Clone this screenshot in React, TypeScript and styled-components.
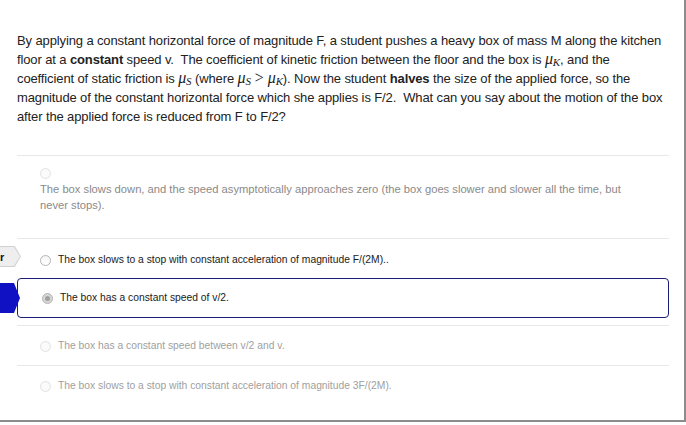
import styled, { createGlobalStyle } from 'styled-components';

const GlobalStyle = createGlobalStyle`
  html, body {
    margin: 0;
    padding: 0;
    background: #ffffff;
  }
  body {
    font-family: "Liberation Sans", Arial, sans-serif;
  }
`;

const Page = styled.div`
  position: relative;
  box-sizing: border-box;
  width: 686px;
  height: 422px;
  padding: 31px 17px 0 17px;
  border-right: 2px solid #8c8c8c;
  border-bottom: 2px solid #8c8c8c;
  background: #ffffff;
  overflow: hidden;
`;

const Question = styled.p`
  margin: 0;
  width: 660px;
  font-size: 13px;
  line-height: 19px;
  letter-spacing: -0.12px;
  color: #222222;

  b {
    font-weight: bold;
  }
`;

const Mu = styled.span`
  font-family: "Liberation Serif", "Times New Roman", serif;
  font-style: italic;
  font-size: 16px;
  line-height: 0;

  sub {
    font-size: 11px;
    vertical-align: -2px;
    line-height: 0;
  }
`;

const Gt = styled.span`
  font-family: "Liberation Serif", "Times New Roman", serif;
  font-size: 16px;
  line-height: 0;
  padding: 0 4px;
`;

const Options = styled.div`
  display: flex;
  flex-direction: column;
  width: 652px;
  margin-top: 29px;
`;

const Option = styled.div<{ $faded?: boolean }>`
  display: flex;
  align-items: center;
  gap: 7px;
  border-top: 1px solid #e8e8e8;
  padding: 12px 0 11px 23px;
  font-size: 10.3px;
  line-height: 16px;
  color: ${(p) => (p.$faded ? '#a0a0a0' : '#1a1a1a')};
`;

const SecondOption = styled(Option)`
  padding-top: 13px;
  padding-bottom: 10px;
`;

const FirstOption = styled.div`
  display: flex;
  flex-direction: column;
  align-items: flex-start;
  gap: 2px;
  border-top: 1px solid #e8e8e8;
  padding: 12px 0 25px 23px;
  font-size: 11.2px;
  line-height: 16px;
  color: #8a8a8a;

  span {
    max-width: 600px;
  }
`;

const SelectedOption = styled.div`
  display: flex;
  align-items: center;
  gap: 7px;
  box-sizing: border-box;
  height: 40px;
  margin-bottom: 7px;
  padding-left: 24px;
  border: 1.5px solid #1c1c7a;
  border-radius: 4px;
  font-size: 10.3px;
  line-height: 16px;
  color: #1a1a1a;
`;

const Radio = styled.span<{ $checked?: boolean; $faded?: boolean }>`
  position: relative;
  flex: none;
  box-sizing: border-box;
  width: 11px;
  height: 11px;
  border-radius: 50%;
  border: 1px solid ${(p) => (p.$faded ? '#e2e2e2' : '#b5b5b5')};
  background: ${(p) =>
    p.$checked ? '#d6d6d6' : p.$faded ? '#fbfbfb' : 'linear-gradient(#f4f4f4, #ffffff)'};

  &::after {
    content: '';
    display: ${(p) => (p.$checked ? 'block' : 'none')};
    position: absolute;
    left: 2px;
    top: 2px;
    width: 5px;
    height: 5px;
    border-radius: 50%;
    background: #a0a0a0;
  }
`;

const Tab = styled.div<{ $top: number; $height: number; $active?: boolean }>`
  position: absolute;
  left: 0;
  top: ${(p) => p.$top}px;
  width: 20px;
  height: ${(p) => p.$height}px;
  display: flex;
  align-items: center;
  background: ${(p) => (p.$active ? '#1111c4' : '#eeeeee')};
  clip-path: polygon(0 0, 70% 0, 100% 50%, 70% 100%, 0 100%);
  font-size: 11px;
  font-weight: bold;
  color: #111111;
  overflow: hidden;
`;

const TabEdge = styled.div`
  position: absolute;
  left: 0;
  top: 246px;
  width: 21px;
  height: 21px;
  background: #d0d0d0;
  clip-path: polygon(0 0, 70% 0, 100% 50%, 70% 100%, 0 100%);
`;

const App = () => {
  return (
    <>
      <GlobalStyle />
      <Page>
        <Question>
          By applying a constant horizontal force of magnitude F, a student pushes a heavy box of mass M along the kitchen
          <br />
          floor at a <b>constant</b> speed v.&nbsp; The coefficient of kinetic friction between the floor and the box is{' '}
          <Mu>
            μ<sub>K</sub>
          </Mu>
          , and the
          <br />
          coefficient of static friction is{' '}
          <Mu>
            μ<sub>S</sub>
          </Mu>{' '}
          (where{' '}
          <Mu>
            μ<sub>S</sub>
          </Mu>
          <Gt>&gt;</Gt>
          <Mu>
            μ<sub>K</sub>
          </Mu>
          ). Now the student <b>halves</b> the size of the applied force, so the
          <br />
          magnitude of the constant horizontal force which she applies is F/2.&nbsp; What can you say about the motion of
          the box
          <br />
          after the applied force is reduced from F to F/2?
        </Question>

        <Options>
          <FirstOption>
            <Radio $faded />
            <span>
              The box slows down, and the speed asymptotically approaches zero (the box goes slower and slower all the
              time, but never stops).
            </span>
          </FirstOption>

          <SecondOption>
            <Radio />
            <span>The box slows to a stop with constant acceleration of magnitude F/(2M)..</span>
          </SecondOption>

          <SelectedOption>
            <Radio $checked />
            <span>The box has a constant speed of v/2.</span>
          </SelectedOption>

          <Option $faded>
            <Radio $faded />
            <span>The box has a constant speed between v/2 and v.</span>
          </Option>

          <Option $faded>
            <Radio $faded />
            <span>The box slows to a stop with constant acceleration of magnitude 3F/(2M).</span>
          </Option>
        </Options>

        <TabEdge />
        <Tab $top={247} $height={19}>
          r
        </Tab>
        <Tab $top={283} $height={30} $active />
      </Page>
    </>
  );
};

export default App;
